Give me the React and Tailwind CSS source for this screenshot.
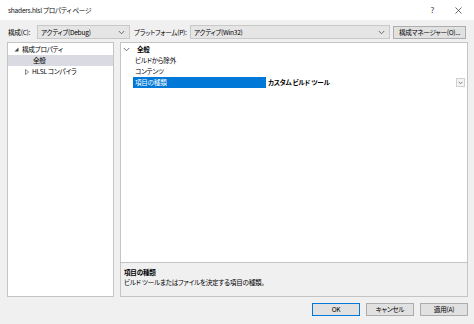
import React from "react";

const Chevron = ({ className = "" }) => (
  <svg width="7" height="5" viewBox="0 0 7 5" className={className}>
    <path d="M0.8 1 L3.5 3.8 L6.2 1" fill="none" stroke="#606060" strokeWidth="0.9" />
  </svg>
);

const Combo = ({ text, w }) => (
  <div className={`${w} h-[14px] flex items-center justify-between bg-[#e5e5e5] border border-[#c8c8c8] pl-[3px] pr-[4px] shrink-0`}>
    <span className="leading-none whitespace-nowrap">{text}</span>
    <Chevron />
  </div>
);

const Btn = ({ text, primary, w = "w-[48px]" }) => (
  <div
    className={`${w} h-[13px] flex items-center justify-center bg-[#e1e1e1] border ${
      primary ? "border-[#0078d7]" : "border-[#adadad]"
    } leading-none whitespace-nowrap overflow-hidden shrink-0`}
  >
    {text}
  </div>
);

export default function App() {
  return (
    <div className={`w-[474px] h-[324px] bg-[#f0f0f0] text-[6.6px] tracking-[-0.25px] text-black flex flex-col overflow-hidden [font-feature-settings:"palt"] [font-variant-east-asian:proportional-width] leading-none font-['Noto_Sans_CJK_JP',sans-serif]`}>
      {/* title bar */}
      <div className="h-[20px] bg-white flex items-center pl-[8px] pr-[12px] shrink-0">
        <span className="text-[#111] whitespace-nowrap">shaders.hlsl プロパティ ページ</span>
        <div className="ml-auto flex items-center gap-[21px] text-[#333]">
          <span className="text-[8px]">?</span>
          <svg width="7" height="7" viewBox="0 0 7 7">
            <path d="M0.5 0.5 L6.5 6.5 M6.5 0.5 L0.5 6.5" stroke="#444" strokeWidth="0.8" />
          </svg>
        </div>
      </div>

      {/* config row */}
      <div className="mt-[5px] h-[14px] flex items-center pl-[8px] shrink-0 whitespace-nowrap">
        <span className="w-[29px] shrink-0">構成(C):</span>
        <Combo text="アクティブ(Debug)" w="w-[93px]" />
        <span className="ml-[4px] w-[56px] shrink-0">プラットフォーム(P):</span>
        <Combo text="アクティブ(Win32)" w="w-[200px]" />
        <div className="ml-[3px]">
          <Btn text="構成マネージャー(O)..." w="w-[73px]" />
        </div>
      </div>

      {/* main */}
      <div className="mt-[3px] h-[255px] flex gap-[6px] pl-[7px] shrink-0">
        {/* tree */}
        <div className="w-[107px] h-full bg-white border border-[#c4c4c4] pt-[1px]">
          <div className="h-[11px] flex items-center pl-[6px]">
            <svg width="5" height="5" viewBox="0 0 5 5" className="mr-[3px]">
              <path d="M4.5 0.5 L4.5 4.5 L0.5 4.5 Z" fill="#444" />
            </svg>
            <span>構成プロパティ</span>
          </div>
          <div className="h-[11px] flex items-center pl-[25px] bg-[#dadae3]">
            <span>全般</span>
          </div>
          <div className="h-[11px] flex items-center pl-[17px]">
            <svg width="4" height="6" viewBox="0 0 4 6" className="mr-[3px]">
              <path d="M0.5 0.5 L3.5 3 L0.5 5.5 Z" fill="none" stroke="#555" strokeWidth="0.7" />
            </svg>
            <span>HLSL コンパイラ</span>
          </div>
        </div>

        {/* right panel */}
        <div className="w-[348px] h-full border border-[#c4c4c4] flex flex-col">
          <div className="h-[219px] bg-white pt-[1px] shrink-0">
            <div className="h-[11px] flex items-center pl-[2px]">
              <Chevron className="mr-[7px]" />
              <span className="font-bold">全般</span>
            </div>
            <div className="h-[11px] flex items-center pl-[14px]">ビルドから除外</div>
            <div className="h-[11px] flex items-center pl-[14px]">コンテンツ</div>
            <div className="h-[11px] flex items-center pl-[12px]">
              <div className="w-[133px] h-full flex items-center pl-[2px] bg-[#0078d7] text-white">項目の種類</div>
              <div className="flex-1 h-full flex items-center pl-[2px] pr-[2px]">
                <span className="font-bold">カスタム ビルド ツール</span>
                <div className="ml-auto w-[9px] h-[9px] border border-[#d0d0d0] bg-[#f4f4f4] flex items-center justify-center">
                  <svg width="5" height="4" viewBox="0 0 5 4">
                    <path d="M0.6 0.8 L2.5 2.8 L4.4 0.8" fill="none" stroke="#666" strokeWidth="0.8" />
                  </svg>
                </div>
              </div>
            </div>
          </div>
          <div className="flex-1 border-t border-[#c4c4c4] bg-[#f0f0f0] pl-[3px] pt-[4px]">
            <div className="font-bold h-[10px] flex items-center">項目の種類</div>
            <div className="h-[10px] flex items-center">ビルド ツールまたはファイルを決定する項目の種類。</div>
          </div>
        </div>
      </div>

      {/* buttons */}
      <div className="mt-[6px] flex justify-end gap-[6px] pr-[6px]">
        <Btn text="OK" primary />
        <Btn text="キャンセル" />
        <Btn text="適用(A)" />
      </div>
    </div>
  );
}
